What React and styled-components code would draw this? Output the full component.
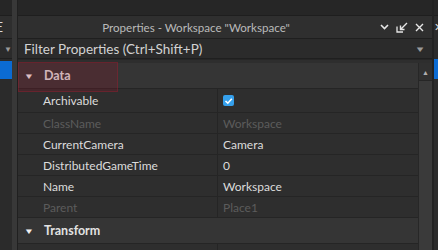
import React from "react";
import styled, { createGlobalStyle } from "styled-components";

const GlobalStyle = createGlobalStyle`
  html, body {
    margin: 0;
    padding: 0;
    background: #262626;
    font-family: Lato, "Noto Sans", sans-serif;
    overflow: hidden;
  }
`;

const Screen = styled.div`
  width: 438px;
  height: 250px;
  display: flex;
  background: #2b2b2b;
  overflow: hidden;
`;

const TopStrip = styled.div`
  height: 15px;
  flex-shrink: 0;
  background: #262626;
  border-bottom: 1px solid #1e1e1e;
`;

const LeftDock = styled.div`
  width: 12px;
  flex-shrink: 0;
  display: flex;
  flex-direction: column;
  background: #2b2b2b;
  overflow: hidden;
`;

const DockTab = styled.div`
  height: 22px;
  flex-shrink: 0;
  display: flex;
  align-items: center;
  justify-content: flex-end;
  color: #d8d8d8;
  font-size: 13px;
  background: #2e2e2e;
  border-bottom: 1px solid #1f1f1f;
  padding-right: 9px;
`;

const DockFilter = styled.div`
  height: 19px;
  flex-shrink: 0;
  display: flex;
  align-items: center;
  justify-content: flex-end;
  color: #9a9a9a;
  font-size: 8px;
  border-bottom: 1px solid #1f1f1f;
`;

const DockSelection = styled.div`
  margin-top: 2px;
  height: 18px;
  flex-shrink: 0;
  background: #0b6bd3;
`;

const Splitter = styled.div`
  width: 5px;
  flex-shrink: 0;
  background: #383838;
  border-right: 1px solid #202020;
`;

const Panel = styled.div`
  width: 414px;
  flex-shrink: 0;
  display: flex;
  flex-direction: column;
  background: #2e2e2e;
  position: relative;
  overflow: hidden;
`;

const TitleBar = styled.div`
  height: 22px;
  flex-shrink: 0;
  display: flex;
  align-items: center;
  background: #2f2f2f;
  border-bottom: 1px solid #1f1f1f;
`;

const Title = styled.div`
  flex: 1;
  text-align: center;
  color: #bababa;
  font-size: 11.6px;
  padding-right: 6px;
  white-space: nowrap;
`;

const TitleIcons = styled.div`
  width: 52px;
  display: flex;
  align-items: center;
  gap: 7px;
  color: #e6e6e6;
`;

const FilterRow = styled.div`
  height: 19px;
  flex-shrink: 0;
  display: flex;
  align-items: center;
  justify-content: space-between;
  padding: 0 8px 0 6px;
  background: #2b2b2b;
  border-bottom: 1px solid #1f1f1f;
  color: #d2d2d2;
  font-size: 13.5px;
`;

const Caret = styled.span`
  color: #9a9a9a;
  font-size: 8px;
  transform: scaleX(1.4);
`;

const GridArea = styled.div`
  flex: 1;
  min-height: 0;
  display: flex;
  padding-top: 3px;
  border-top: 1px solid #262626;
  overflow: hidden;
`;

const Grid = styled.div`
  flex: 1;
  display: flex;
  flex-direction: column;
`;

const Header = styled.div`
  height: 25px;
  flex-shrink: 0;
  display: flex;
  align-items: center;
  background: #353535;
  border-bottom: 1px solid #252525;
  color: #e2e2e2;
  font-size: 12.5px;
  font-weight: 700;
  padding-left: 7px;
  gap: 11px;
`;

const Arrow = styled.span`
  font-size: 8px;
  color: #f0f0f0;
  transform: scaleX(1.3);
`;

const Row = styled.div`
  height: ${(p) => p.$h || 20}px;
  flex-shrink: 0;
  display: grid;
  grid-template-columns: 200px 1fr;
  border-bottom: 1px solid #252525;
  font-size: 12px;
  color: ${(p) => (p.$disabled ? "#5c5c5c" : "#dcdcdc")};
`;

const NameCell = styled.div`
  display: flex;
  align-items: center;
  padding-left: 25px;
  border-right: 1px solid #252525;
`;

const ValueCell = styled.div`
  display: flex;
  align-items: center;
  padding-left: 5px;
`;

const Check = styled.span`
  width: 11px;
  height: 11px;
  border-radius: 2px;
  background: #35a0ec;
  display: flex;
  align-items: center;
  justify-content: center;
`;

const Scrollbar = styled.div`
  width: 13px;
  background: #3a3a3a;
  border-left: 1px solid #272727;
  display: flex;
  flex-direction: column;
`;

const ScrollUp = styled.div`
  height: 17px;
  background: #303030;
  border-bottom: 1px solid #262626;
  display: flex;
  align-items: center;
  justify-content: center;
  color: #b0b0b0;
  font-size: 7px;
`;

const Highlight = styled.div`
  position: absolute;
  left: 0;
  top: 62px;
  width: 100px;
  height: 30px;
  background: rgba(150, 20, 40, 0.22);
  border: 1px solid rgba(170, 30, 50, 0.35);
  box-sizing: border-box;
  pointer-events: none;
`;

const RightDock = styled.div`
  width: 4px;
  flex-shrink: 0;
  display: flex;
  flex-direction: column;
  background: #2b2b2b;
  border-left: 2px solid #222;
  overflow: hidden;
`;

const RightTab = styled.div`
  height: 22px;
  flex-shrink: 0;
  color: #ddd;
  font-size: 11px;
  display: flex;
  align-items: center;
  overflow: hidden;
`;

const RightSelection = styled.div`
  margin-top: 21px;
  height: 20px;
  flex-shrink: 0;
  background: #0b6bd3;
`;

const ChevronIcon = () => (
  <svg width="9" height="6" viewBox="0 0 9 6">
    <path d="M1 1l3.5 3.5L8 1" stroke="currentColor" strokeWidth="1.6" fill="none" />
  </svg>
);

const DockIcon = () => (
  <svg width="12" height="11" viewBox="0 0 12 11">
    <path d="M1 4.5V10h6" stroke="currentColor" strokeWidth="1.3" fill="none" />
    <path d="M11 1L4.5 7.5M4.5 3.5v4h4" stroke="currentColor" strokeWidth="1.4" fill="none" />
  </svg>
);

const CloseIcon = () => (
  <svg width="9" height="9" viewBox="0 0 9 9">
    <path d="M1 1l7 7M8 1L1 8" stroke="currentColor" strokeWidth="1.4" />
  </svg>
);

const CheckMark = () => (
  <svg width="9" height="8" viewBox="0 0 9 8">
    <path d="M1.5 4l2.3 2.2L7.8 1.8" stroke="#fff" strokeWidth="1.6" fill="none" />
  </svg>
);

const dataRows = [
  { name: "Archivable", check: true, h: 23 },
  { name: "ClassName", value: "Workspace", disabled: true },
  { name: "CurrentCamera", value: "Camera" },
  { name: "DistributedGameTime", value: "0" },
  { name: "Name", value: "Workspace" },
  { name: "Parent", value: "Place1", disabled: true },
];

export default function App() {
  return (
    <>
      <GlobalStyle />
      <Screen>
        <LeftDock>
          <TopStrip />
          <DockTab>E</DockTab>
          <DockFilter>▼</DockFilter>
          <DockSelection />
        </LeftDock>
        <Splitter />
        <Panel>
          <TopStrip />
          <TitleBar>
            <Title>Properties - Workspace "Workspace"</Title>
            <TitleIcons>
              <ChevronIcon />
              <DockIcon />
              <CloseIcon />
            </TitleIcons>
          </TitleBar>
          <FilterRow>
            <span>Filter Properties (Ctrl+Shift+P)</span>
            <Caret>▼</Caret>
          </FilterRow>
          <GridArea>
            <Grid>
              <Header>
                <Arrow>▼</Arrow>
                Data
              </Header>
              {dataRows.map((r) => (
                <Row key={r.name} $h={r.h} $disabled={r.disabled}>
                  <NameCell>{r.name}</NameCell>
                  <ValueCell>
                    {r.check ? (
                      <Check>
                        <CheckMark />
                      </Check>
                    ) : (
                      r.value
                    )}
                  </ValueCell>
                </Row>
              ))}
              <Header>
                <Arrow>▼</Arrow>
                Transform
              </Header>
              <Row>
                <NameCell />
                <ValueCell />
              </Row>
            </Grid>
            <Scrollbar>
              <ScrollUp>▲</ScrollUp>
            </Scrollbar>
          </GridArea>
          <Highlight />
        </Panel>
        <RightDock>
          <TopStrip />
          <RightTab>✕</RightTab>
          <RightSelection />
        </RightDock>
      </Screen>
    </>
  );
}
